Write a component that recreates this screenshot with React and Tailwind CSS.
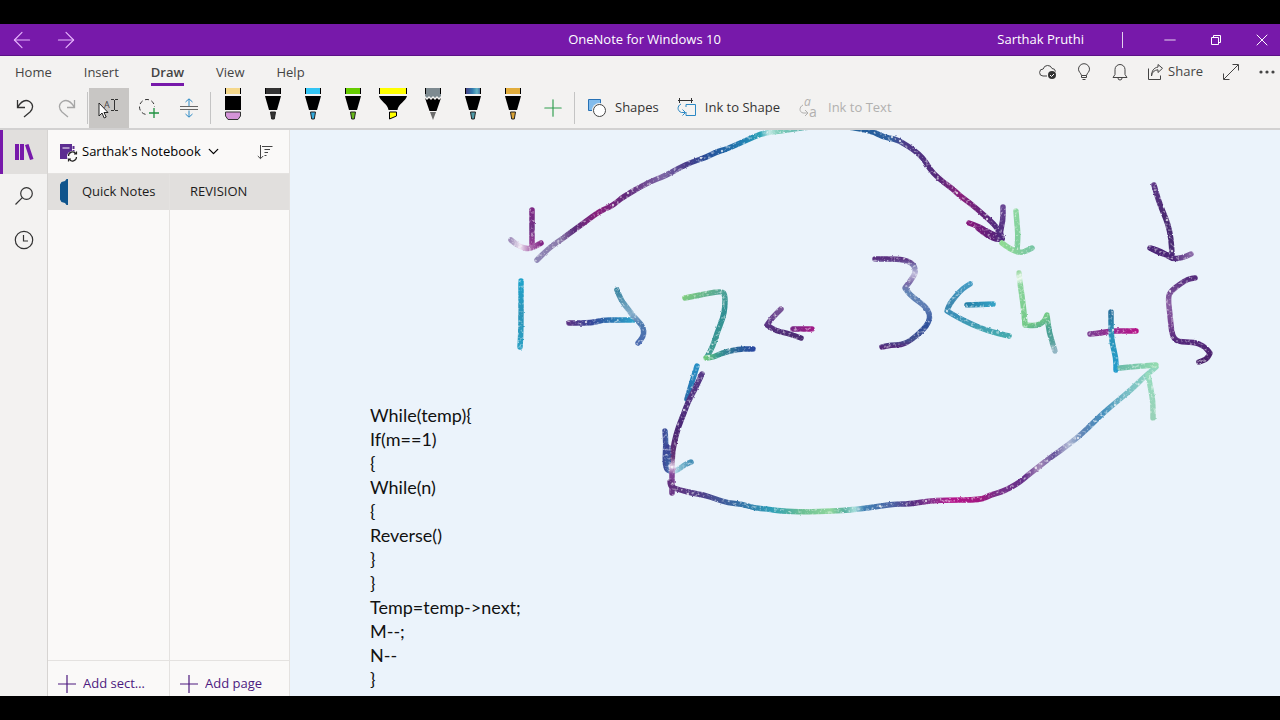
import { useState } from "react";
import { ArrowLeft, ArrowRight, Plus, X, Minus, ChevronDown } from "lucide-react";

const PENS = [
  { name: "Black pen", color: "#333333", tip: "#333333" },
  { name: "Blue pen", color: "#33c5f4", tip: "#33a9dc" },
  { name: "Green pen", color: "#66cc00", tip: "#66b81a" },
  { name: "Yellow highlighter", color: "#ffff00", kind: "highlighter" },
  { name: "Pencil", color: "#7d8a90", tip: "#6d6d6d", kind: "pencil" },
  { name: "Galaxy pen", color: "url(#galaxy)", tip: "#4f9aa8" },
  { name: "Gold pen", color: "#e2ad3c", tip: "#d9a234" },
];

const NOTE_LINES = [
  "While(temp){",
  "If(m==1)",
  "{",
  "While(n)",
  "{",
  "Reverse()",
  "}",
  "}",
  "Temp=temp->next;",
  "M--;",
  "N--",
  "}",
];

// every stroke: points, gradient axis (x1 y1 x2 y2) and its colour stops
const STROKES = [
  // long arc from 1 to 4
  {
    pts: "537 260 545 252 553 245 562 239 570 233 585 222 600 211 610 207 617 202 623 197 647 183 667 175 679 168 692 162 707 157 716 152 727 149 747 140 763 133 780 131 800 128 830 125 850 127 872 131 883 137 895 139 903 143 914 150 923 158 928 166 933 173 943 182 953 189 960 196 970 203 984 215 997 227 1002 238",
    axis: [537, 0, 1002, 0],
    stops: [[0, "#8e86b5"], [5, "#8b7aaa"], [8, "#5b2d7a"], [13, "#8a1f7c"], [19, "#622a7c"], [27, "#7c66a5"], [32, "#4a3a88"], [37, "#24509a"], [45, "#2184b4"], [48, "#2ba3b5"], [50, "#c2e8e4"], [52, "#7cccb8"], [58, "#5fb0b0"], [70, "#1f5b9a"], [76, "#2f609f"], [79, "#4b3a88"], [86, "#55297a"], [91, "#8a1f7c"], [96, "#62247a"], [100, "#4a3080"]],
  },
  { pts: "969 223 980 227 990 233 1002 238 998 240 988 236 978 228", axis: [969, 0, 1002, 0], stops: [[0, "#86187c"], [100, "#4b2479"]] },
  { pts: "1003 207 1003 221 1000 232 1002 239", axis: [0, 206, 0, 239], stops: [[0, "#6a4794"], [100, "#4b2479"]] },
  // arrow above 1
  { pts: "532 210 532 246", axis: [0, 210, 0, 246], stops: [[0, "#7d2784"], [50, "#6e3184"], [100, "#9a3f98"]] },
  { pts: "511 240 516 244 521 247 528 249 534 247 541 243", axis: [511, 0, 541, 0], stops: [[0, "#a18fbb"], [30, "#ede4f2"], [60, "#b47cb8"], [100, "#812584"]] },
  // arrow above 4
  { pts: "1016 211 1017 224 1018 235 1017 250", axis: [0, 211, 0, 250], stops: [[0, "#8cd7a0"], [100, "#7bcc9a"]] },
  { pts: "1002 243 1010 249 1020 253 1026 251 1032 248", axis: [1002, 0, 1032, 0], stops: [[0, "#8fdb92"], [100, "#78c5a4"]] },
  // arrow above 5
  { pts: "1154 185 1158 199 1163 212 1168 224 1171 238 1172 254", axis: [0, 185, 0, 254], stops: [[0, "#5c3585"], [50, "#47286f"], [100, "#4b2c76"]] },
  { pts: "1150 248 1157 250 1164 253 1172 259 1182 258 1191 254", axis: [1150, 0, 1191, 0], stops: [[0, "#4b2577"], [55, "#4b2577"], [100, "#8a6aa8"]] },
  { pts: "1152 249 1160 253 1171 256", axis: [1152, 0, 1171, 0], stops: [[0, "#4b2577"], [100, "#4b2577"]] },
  // 1
  { pts: "521 281 521 330 520 347", axis: [0, 281, 0, 347], stops: [[0, "#1fa3cb"], [50, "#2b94b8"], [100, "#2ba0c4"]] },
  // arrow 1 to 2
  { pts: "569 323 592 323 602 320 617 320 634 320", axis: [569, 0, 634, 0], stops: [[0, "#5b3384"], [35, "#36489a"], [65, "#2a74b0"], [100, "#2fa5cc"]] },
  { pts: "617 290 621 300 628 309 634 317 642 325 644 331 643 337 638 343", axis: [0, 290, 0, 343], stops: [[0, "#35829f"], [45, "#86aecb"], [65, "#4b78ae"], [100, "#4b6bb0"]] },
  // 2
  { pts: "685 298 695 296 705 294 722 291 725 295 725 307 723 318 717 333 713 346 707 357", axis: [685, 291, 735, 330], stops: [[0, "#82cf7c"], [45, "#53a597"], [70, "#2f8f94"], [100, "#459f92"]] },
  { pts: "706 358 714 357 722 353 738 349 753 349", axis: [706, 0, 753, 0], stops: [[0, "#6bc77b"], [25, "#3a9a90"], [65, "#2a6598"], [100, "#2747a0"]] },
  // arrow 3 to 2
  { pts: "781 309 772 318 767 325 776 331 787 333 801 338", axis: [0, 309, 0, 338], stops: [[0, "#7b5799"], [50, "#5b3384"], [100, "#4a2a70"]] },
  { pts: "793 329 812 329", axis: [793, 0, 812, 0], stops: [[0, "#7a2585"], [100, "#a01b88"]] },
  // 3
  { pts: "875 259 898 259 908 261 914 265 916 272 911 280 905 288 911 296 925 306 930 314 929 322 923 330 910 341 901 345 891 345 882 347", axis: [0, 259, 0, 347], stops: [[0, "#5a2f80"], [8, "#8080b5"], [17, "#c0bcdc"], [27, "#7d6aa8"], [38, "#6286b6"], [55, "#5f7db4"], [75, "#2d4f9b"], [92, "#45508f"], [100, "#54287b"]] },
  // arrow 4 to 3
  { pts: "970 284 962 289 955 297 949 305 947 311 957 317 971 324 988 331 1009 336", axis: [0, 284, 0, 336], stops: [[0, "#469cc4"], [40, "#3b86ae"], [60, "#3a90b8"], [100, "#45aaae"]] },
  { pts: "967 305 993 304", axis: [967, 300, 993, 305], stops: [[0, "#227ea6"], [100, "#35a2c5"]] },
  // 4
  { pts: "1019 273 1020 283 1022 296 1024 312 1025 325 1036 326 1044 322 1047 315 1049 332 1055 351", axis: [1015, 273, 1048, 353], stops: [[0, "#9cd8a5"], [8, "#eefaf0"], [15, "#8ad49c"], [60, "#73c987"], [75, "#459f92"], [90, "#55a19b"], [100, "#91b5c3"]] },
  // plus
  { pts: "1090 334 1101 333 1110 331 1122 331 1136 331", axis: [1090, 0, 1136, 0], stops: [[0, "#7b3c91"], [60, "#a02590"], [100, "#b51388"]] },
  { pts: "1111 312 1111 328 1112 343 1116 358 1116 370", axis: [0, 312, 0, 370], stops: [[0, "#2b719d"], [40, "#2a94b8"], [100, "#239ccc"]] },
  // 5
  { pts: "1195 278 1188 279 1180 284 1171 291 1168 297 1170 315 1172 336 1178 342 1194 342 1204 346 1210 353 1207 359 1199 362", axis: [0, 278, 0, 362], stops: [[0, "#552b7c"], [30, "#8b61a4"], [55, "#754291"], [75, "#54287b"], [100, "#471f68"]] },
  // stem below 2
  { pts: "697 366 692 382 687 399", axis: [0, 366, 0, 399], stops: [[0, "#278fc5"], [100, "#286ca9"]] },
  { pts: "665 431 666 445 665 459 666 469 671 472 678 470 684 465 691 462", axis: [665, 0, 691, 0], stops: [[0, "#3d4c98"], [10, "#4766a8"], [30, "#d8eaf4"], [55, "#85bfd2"], [100, "#438db5"]] },
  { pts: "702 374 694 391 688 402 684 413 678 428 674 443 672 457 672 493", axis: [0, 374, 0, 493], stops: [[0, "#573a87"], [45, "#492675"], [70, "#653376"], [78, "#e7d8ec"], [84, "#814497"], [100, "#6b3787"]] },
  { pts: "668 447 668 462", axis: [0, 447, 0, 462], stops: [[0, "#3b4194"], [100, "#3b5b9f"]] },
  // long arc from 2 to 5
  {
    pts: "670 482 671 487 680 490 692 493 704 495 716 499 728 503 742 504 754 508 767 509 780 511 805 512 833 511 850 510 867 508 881 506 895 504 909 504 929 501 945 500 981 500 990 495 1002 492 1019 483 1028 475 1036 469 1047 460 1060 451 1077 438 1088 428 1101 415 1115 403 1132 389 1142 379 1156 367",
    axis: [670, 0, 1156, 0],
    stops: [[0, "#63307e"], [7, "#4d428c"], [15, "#3275a9"], [21, "#2e9fb7"], [27, "#6bbf94"], [33, "#8fd69c"], [36, "#57b0a0"], [38, "#a8dfdc"], [40, "#3f7fb3"], [46, "#4e62a4"], [50, "#562b80"], [54, "#8b3390"], [58, "#b5158c"], [64, "#a0167f"], [67, "#7a3089"], [73, "#65308a"], [76, "#a58bb9"], [79, "#65529b"], [82, "#b2bad5"], [85, "#5c84b5"], [89, "#458fbd"], [94, "#7abfc6"], [100, "#93d8bd"]],
  },
  { pts: "1120 368 1130 367 1142 366 1156 365", axis: [1120, 0, 1156, 0], stops: [[0, "#6bbba9"], [100, "#94dbb0"]] },
  { pts: "1148 375 1151 390 1153 402 1153 418", axis: [0, 375, 0, 418], stops: [[0, "#96dbbd"], [100, "#98d1b8"]] },
];

const SPARKS = [
  [613, 205], [628, 193], [701, 158], [722, 151], [892, 137], [900, 141], [957, 193], [987, 219],
  [586, 322], [708, 352], [709, 356], [684, 410], [672, 467], [688, 494], [1078, 438], [1036, 468],
  [1115, 405], [926, 501], [880, 506], [1167, 220], [1172, 251], [1170, 291], [947, 311], [1113, 330],
];

// rounds gentle bends, leaves sharp corners as they are
function smooth(pts) {
  const n = pts.split(" ").map(Number);
  const p = [];
  for (let i = 0; i < n.length; i += 2) p.push([n[i], n[i + 1]]);
  let d = `M${p[0][0]} ${p[0][1]}`;
  for (let i = 1; i < p.length - 1; i++) {
    const [x, y] = p[i];
    const [px, py] = p[i - 1];
    const [nx, ny] = p[i + 1];
    const ax = x - px;
    const ay = y - py;
    const bx = nx - x;
    const by = ny - y;
    const cos = (ax * bx + ay * by) / (Math.hypot(ax, ay) * Math.hypot(bx, by));
    if (cos < 0.4) {
      d += `L${x} ${y}`;
    } else {
      d += `L${(px + x) / 2} ${(py + y) / 2}Q${x} ${y} ${(x + nx) / 2} ${(y + ny) / 2}`;
    }
  }
  const last = p[p.length - 1];
  return `${d}L${last[0]} ${last[1]}`;
}

function Icon({ size = 20, className = "", children, ...rest }) {
  return (
    <svg
      width={size}
      height={size}
      viewBox={`0 0 ${size} ${size}`}
      fill="none"
      stroke="currentColor"
      aria-hidden="true"
      className={`shrink-0 ${className}`}
      {...rest}
    >
      {children}
    </svg>
  );
}

function Pen({ pen }) {
  if (pen.kind === "highlighter") {
    return (
      <svg width="30" height="32" viewBox="0 0 30 32" aria-hidden="true">
        <path d="M1 0h28v6H1z" fill={pen.color} />
        <path d="M1.500 0v6M28.500 0v6" stroke="#000" />
        <path d="M1 8h28c-1 5-9 8-9.500 14h-9C10 16 2 13 1 8z" fill="#000" />
        <path d="M11.500 24h7v4l-7 3z" fill={pen.color} stroke="#000" />
      </svg>
    );
  }
  const pencil = pen.kind === "pencil";
  return (
    <svg width="18" height="32" viewBox="0 0 18 32" aria-hidden="true">
      <path d={pencil ? "M1 0h16v8l-2 2-2-2-2 2-2-2-2 2-2-2-2 2-2-2z" : "M1 0h16v6H1z"} fill={pen.color} />
      <path d="M1.500 0v6M16.500 0v6" stroke="#000" />
      <path d={pencil ? "M1 10l2 2 2-2 2 2 2-2 2 2 2-2 2 2 2-2-4.500 13h-7z" : "M1 8h16l-4 14H5z"} fill="#000" />
      <path d={pencil ? "M6 24h6l-3 8z" : "M6.500 24h5l-1.200 7h-2.600z"} fill={pen.tip} stroke="#222" strokeWidth={pencil ? 0 : 1} />
    </svg>
  );
}

function Eraser() {
  return (
    <svg width="18" height="32" viewBox="0 0 18 32" aria-hidden="true">
      <path d="M1 0h16v6H1z" fill="#f5d88b" />
      <path d="M1.500 0v6M16.500 0v6" stroke="#000" />
      <path d="M1 8h16v14H1z" fill="#000" />
      <path d="M1.500 24h15v4l-2.500 3.500H4L1.500 28z" fill="#d494d8" stroke="#333" />
    </svg>
  );
}

function ToolButton({ label, active, top, children }) {
  return (
    <button
      aria-label={label}
      className={`w-10 h-10 flex justify-center shrink-0 ${top ? "items-start" : "items-center"} ${
        active ? "bg-[#c8c6c4]" : "hover:bg-black/5"
      }`}
    >
      {children}
    </button>
  );
}

function Divider() {
  return <div className="w-px h-8 mx-px bg-[#c4c4c4] shrink-0" />;
}

function TitleBar() {
  return (
    <header className="h-8 shrink-0 flex items-center bg-[#7719aa] border-b border-[#5b1187] text-white text-[13px]">
      <div className="flex-1 flex items-center gap-[18px] pl-[9px]">
        <button aria-label="Back" className="text-[#e9b8ff]">
          <ArrowLeft size={26} strokeWidth={1} />
        </button>
        <button aria-label="Forward" className="text-[#e9b8ff]">
          <ArrowRight size={26} strokeWidth={1} />
        </button>
      </div>
      <h1>OneNote for Windows 10</h1>
      <div className="flex-1 flex items-center justify-end">
        <span>Sarthak Pruthi</span>
        <div className="w-px h-4 ml-[38px] mr-[29px] bg-white/80" />
        <div className="flex items-center gap-[10px]">
          <button aria-label="Minimize" className="w-9 flex justify-center">
            <Minus size={18} strokeWidth={1.1} />
          </button>
          <button aria-label="Restore" className="w-9 flex justify-center">
            <Icon size={12}>
              <path d="M1.500 3.500h7v7h-7zM3.500 3.500v-2h7v7h-2" />
            </Icon>
          </button>
          <button aria-label="Close" className="w-9 flex justify-center">
            <X size={20} strokeWidth={1.2} />
          </button>
        </div>
      </div>
    </header>
  );
}

function Tabs() {
  const [tab, setTab] = useState("Draw");
  return (
    <div className="h-8 flex items-center justify-between text-[13px] text-[#444]">
      <nav className="h-8 flex gap-8 pl-[15px]">
        {["Home", "Insert", "Draw", "View", "Help"].map((t) => (
          <button
            key={t}
            onClick={() => setTab(t)}
            className={`h-[30px] border-b-3 pt-1 leading-5 ${
              t === tab ? "font-semibold border-[#7719aa]" : "border-transparent"
            }`}
          >
            {t}
          </button>
        ))}
      </nav>
      <div className="flex items-center pr-[3px]">
        <button aria-label="Sync status" className="mr-4">
          <Icon size={20}>
            <path d="M9 14H5a3.500 3.500 0 0 1 .2-7A4.600 4.600 0 0 1 14 6.500a3.500 3.500 0 0 1 3.500 3" />
            <circle cx="14" cy="13" r="4" fill="#333" stroke="none" />
            <path d="M12 13l1.500 1.500L16 12" stroke="#fff" />
          </Icon>
        </button>
        <button aria-label="Tell me" className="mr-4">
          <Icon size={20}>
            <path d="M7.500 13.500C7 11 4.500 10 4.500 7.200a5.500 5.500 0 0 1 11 0c0 2.800-2.500 3.800-3 6.300zM7.500 13.500v2h5v-2M8.500 17.500h3" />
          </Icon>
        </button>
        <button aria-label="Notifications" className="mr-4">
          <Icon size={20}>
            <path d="M3 15.500h14l-2-3V7.500a5 5 0 0 0-10 0v5zM8 16a2 2 0 0 0 4 0" />
          </Icon>
        </button>
        <button className="mr-[18px] flex items-center gap-1">
          <Icon size={18}>
            <path d="M2.500 5.500v11h12v-4M5.500 13c.5-4 3-6 6.500-6.200V9.500l4.500-4.200L12 1.500v2.600C8 4.500 5.500 8 5.500 13z" />
          </Icon>
          Share
        </button>
        <button aria-label="Full screen" className="mr-4">
          <Icon size={20}>
            <path d="M3 17L17 3M11.500 2.500h6v6M2.500 11.500v6h6" />
          </Icon>
        </button>
        <button aria-label="More">
          <Icon size={20} fill="currentColor" stroke="none">
            <circle cx="4" cy="10" r="1.600" />
            <circle cx="10" cy="10" r="1.600" />
            <circle cx="16" cy="10" r="1.600" />
          </Icon>
        </button>
      </div>
    </div>
  );
}

function Toolbar() {
  return (
    <div className="h-10 flex items-center pl-[6px] text-[13px] text-[#333]">
      <ToolButton label="Undo">
        <Icon>
          <path d="M1.500 2v7.500H9M1.500 9.500C5 3.500 9 1 13.500 3.500c4.500 3 3.500 7.500.5 10.500l-6 5" strokeWidth="1.300" />
        </Icon>
      </ToolButton>
      <ToolButton label="Redo">
        <Icon className="text-[#a6a6a6]">
          <path d="M18.500 2v7.500H11M18.500 9.500C15 3.500 11 1 6.500 3.500 2 6.500 3 11 6 14l6 5" strokeWidth="1.300" />
        </Icon>
      </ToolButton>
      <Divider />
      <ToolButton label="Select objects or type text" active>
        <svg width="24" height="26" viewBox="0 0 24 26" aria-hidden="true">
          <path d="M14 4.500h3M18 4.500h3M17.500 5v10M14 15.500h3M18 15.500h3" stroke="#333" fill="none" />
          <text x="7" y="13" fontSize="9" fill="#444">A</text>
          <path d="M2 8v13l3-3 2.200 5 2-1L7 17.500h4z" fill="#fff" stroke="#222" />
        </svg>
      </ToolButton>
      <ToolButton label="Lasso select">
        <Icon size={22}>
          <circle cx="9" cy="10" r="7.500" strokeDasharray="4 2.500" pathLength="46" />
          <path d="M10 10h12v12H10z" fill="#f3f2f1" stroke="none" />
          <path d="M16 11v10M11 16h10" stroke="#1f9140" strokeWidth="1.300" />
        </Icon>
      </ToolButton>
      <ToolButton label="Insert or remove space">
        <Icon>
          <path d="M1 8.500h18M1 11.500h18" stroke="#666" strokeWidth="1.200" />
          <path d="M10 8V1M6.500 4L10 .8 13.500 4M10 12.500V19M6.500 16l3.500 3.200 3.500-3.200" stroke="#2b88c4" />
        </Icon>
      </ToolButton>
      <Divider />
      <div className="flex pl-px">
        <ToolButton label="Eraser" top>
          <Eraser />
        </ToolButton>
        {PENS.map((pen) => (
          <ToolButton key={pen.name} label={pen.name} top>
            <Pen pen={pen} />
          </ToolButton>
        ))}
        <ToolButton label="Add pen">
          <Plus size={28} strokeWidth={1} className="text-[#2f9e4f]" />
        </ToolButton>
      </div>
      <Divider />
      <button className="flex items-center gap-2 ml-[11px]">
        <Icon>
          <path d="M1.500 1.500h12v11h-12z" fill="#83bcec" stroke="#2671b5" />
          <circle cx="12.500" cy="12.500" r="7.500" fill="#f3f2f1" stroke="none" />
          <circle cx="12.500" cy="12.500" r="6" fill="#fff" stroke="#444" />
        </Icon>
        Shapes
      </button>
      <button className="flex items-center gap-2 ml-[18px]">
        <Icon>
          <path d="M1 2.500h15M2.500 0v5M14.500 0v5" stroke="#333" />
          <path d="M9 6.500h9.500v11H9V14M9 6.500V9M4 6C0 8 0 13 4.500 14.500H8M5.500 11.500l3 3-3 3" stroke="#2b88c4" />
        </Icon>
        Ink to Shape
      </button>
      <button disabled className="flex items-center gap-2 ml-[18px] text-[#b1b0af]">
        <svg width="22" height="36" viewBox="0 -7 22 36" fill="currentColor" aria-hidden="true">
          <text x="6" y="9" fontSize="12" fontStyle="italic">a</text>
          <text x="11" y="20" fontSize="14">a</text>
          <path d="M5 8c-4 2-4 7 0 8h4M7 13l3 3-3 3" fill="none" stroke="currentColor" />
        </svg>
        Ink to Text
      </button>
    </div>
  );
}

function Rail() {
  return (
    <nav className="w-12 shrink-0 bg-[#f3f2f1] border-r border-[#d6d4d2] text-[#333]">
      <button
        aria-label="Notebooks"
        className="w-full h-11 flex items-center justify-center bg-[#e1dfdd] border-l-3 border-[#7719aa] pr-[3px]"
      >
        <Icon size={20} fill="#7719aa" stroke="none">
          <path d="M1 2h4v16H1zM6 2h4v16H6zM11 3l3.500-1 5 15-3.500 1z" />
        </Icon>
      </button>
      <button aria-label="Search" className="w-full h-11 flex items-center justify-center">
        <Icon size={20}>
          <circle cx="12.500" cy="7.500" r="5.800" strokeWidth="1.200" />
          <path d="M8.300 11.700L1.500 18.500" strokeWidth="1.200" />
        </Icon>
      </button>
      <button aria-label="Recent notes" className="w-full h-11 flex items-center justify-center">
        <Icon size={20}>
          <circle cx="10" cy="10" r="8.700" strokeWidth="1.200" />
          <path d="M9.500 5v6H14" strokeWidth="1.200" />
        </Icon>
      </button>
    </nav>
  );
}

function AddButton({ children }) {
  return (
    <button className="h-9 shrink-0 flex items-center gap-[7px] pl-[10px] pt-[10px] border-t border-[#e4e2e0] font-medium text-[#4d1a7f]">
      <Icon size={18}>
        <path d="M9 0v18M0 9h18" strokeWidth="1.200" />
      </Icon>
      <span className="truncate">{children}</span>
    </button>
  );
}

function NotebookPane() {
  return (
    <aside className="w-[242px] shrink-0 flex flex-col bg-[#faf9f8] border-r border-[#e4e2e0] text-[13px] text-[#1b1b1b]">
      <div className="h-11 shrink-0 flex items-center justify-between pl-[11px] pr-4 border-b border-[#e4e2e0]">
        <button className="flex items-center font-medium text-black">
          <Icon size={20} className="mr-[3px]">
            <path d="M1 2h12v15H1z" fill="#5c2d91" stroke="none" />
            <path d="M3.500 6h7" stroke="#fff" />
            <path d="M14.500 4v3M14.500 8v2" stroke="#5c2d91" strokeWidth="2" />
            <circle cx="13.500" cy="14.500" r="5.500" fill="#faf9f8" stroke="none" />
            <path d="M9.500 14a4 4 0 0 1 7.500-2M17.500 9.500V12H15M17.500 15a4 4 0 0 1-7.500 2M9.500 19.500V17H12" stroke="#222" strokeWidth="1.200" />
          </Icon>
          Sarthak's Notebook
          <ChevronDown size={17} strokeWidth={1.8} className="ml-1" />
        </button>
        <button aria-label="Sort pages" className="text-[#444]">
          <Icon size={16}>
            <path d="M3.500 1v13.500M.8 12l2.700 2.700L6.200 12M5 2.500h10.500M7.500 5.500H13M7.500 8.500H11M7.500 11.500H9.500" />
          </Icon>
        </button>
      </div>
      <div className="flex-1 min-h-0 grid grid-cols-[122px_1fr]">
        <div className="flex flex-col border-r border-[#e4e2e0]">
          <button className="h-9 flex items-center pl-3 bg-[#e1dfdd]">
            <Icon size={10} height={26} viewBox="0 0 10 26" className="mr-3" stroke="none" fill="#0f548c">
              <path d="M8 0v26H6.500l-1.500-2-3.500-1L0 20.500v-15L1.500 3 5 2l1.500-2z" />
            </Icon>
            Quick Notes
          </button>
          <div className="flex-1" />
          <AddButton>Add sect…</AddButton>
        </div>
        <div className="flex flex-col">
          <button className="h-9 pl-5 text-left bg-[#e1dfdd]">REVISION</button>
          <div className="flex-1" />
          <AddButton>Add page</AddButton>
        </div>
      </div>
    </aside>
  );
}

function Ink() {
  return (
    <svg
      width="990"
      height="566"
      viewBox="290 130 990 566"
      fill="none"
      strokeLinecap="round"
      strokeLinejoin="round"
      className="absolute left-0 top-0 pointer-events-none"
      role="img"
      aria-label="Ink drawing"
    >
      <defs>
        {/* rough edge and glitter of the galaxy ink */}
        <filter id="glitter" filterUnits="userSpaceOnUse" x="290" y="120" width="990" height="576" colorInterpolationFilters="sRGB">
          <feTurbulence type="fractalNoise" baseFrequency="0.35" numOctaves="2" seed="4" result="noise" />
          <feDisplacementMap in="SourceGraphic" in2="noise" scale="2" xChannelSelector="R" yChannelSelector="G" result="rough" />
          <feColorMatrix in="noise" type="matrix" values="0 0 0 0 1  0 0 0 0 1  0 0 0 0 1  0 0 2 0 -1.050" result="specks" />
          <feComposite in="specks" in2="rough" operator="in" result="inside" />
          <feMerge>
            <feMergeNode in="rough" />
            <feMergeNode in="inside" />
          </feMerge>
        </filter>
        {STROKES.map(({ axis: [x1, y1, x2, y2], stops }, i) => (
          <linearGradient key={i} id={`ink${i}`} gradientUnits="userSpaceOnUse" x1={x1} y1={y1} x2={x2} y2={y2}>
            {stops.map(([at, color]) => (
              <stop key={at} offset={`${at}%`} stopColor={color} />
            ))}
          </linearGradient>
        ))}
      </defs>
      <g filter="url(#glitter)">
        {STROKES.map((s, i) => (
          <path key={i} d={smooth(s.pts)} stroke={`url(#ink${i})`} strokeWidth="5.500" />
        ))}
      </g>
      {SPARKS.map(([x, y]) => (
        <circle key={`${x}-${y}`} cx={x} cy={y} r="1.200" fill="#fff" fillOpacity="0.7" />
      ))}
    </svg>
  );
}

export default function App() {
  return (
    <div className="h-screen flex flex-col py-6 bg-black overflow-hidden font-['Open_Sans','Noto_Sans',sans-serif]">
      <svg width="0" height="0" className="absolute" aria-hidden="true">
        <linearGradient id="galaxy">
          <stop offset="0%" stopColor="#4a3a80" />
          <stop offset="45%" stopColor="#2f78ad" />
          <stop offset="75%" stopColor="#63b5c4" />
          <stop offset="100%" stopColor="#3f5f98" />
        </linearGradient>
      </svg>
      <TitleBar />
      <div className="shrink-0 bg-[#f3f2f1] border-b-2 border-[#d2d1d1]">
        <Tabs />
        <Toolbar />
      </div>
      <div className="flex-1 min-h-0 flex">
        <Rail />
        <NotebookPane />
        <main className="flex-1 min-w-0 relative overflow-hidden bg-[#ebf3fb] pl-20 pt-[273px]">
          <div className="font-['Lato',sans-serif] text-[18px] leading-6 text-[#111]">
            {NOTE_LINES.map((line, i) => (
              <p key={i}>{line}</p>
            ))}
          </div>
          <Ink />
        </main>
      </div>
    </div>
  );
}
